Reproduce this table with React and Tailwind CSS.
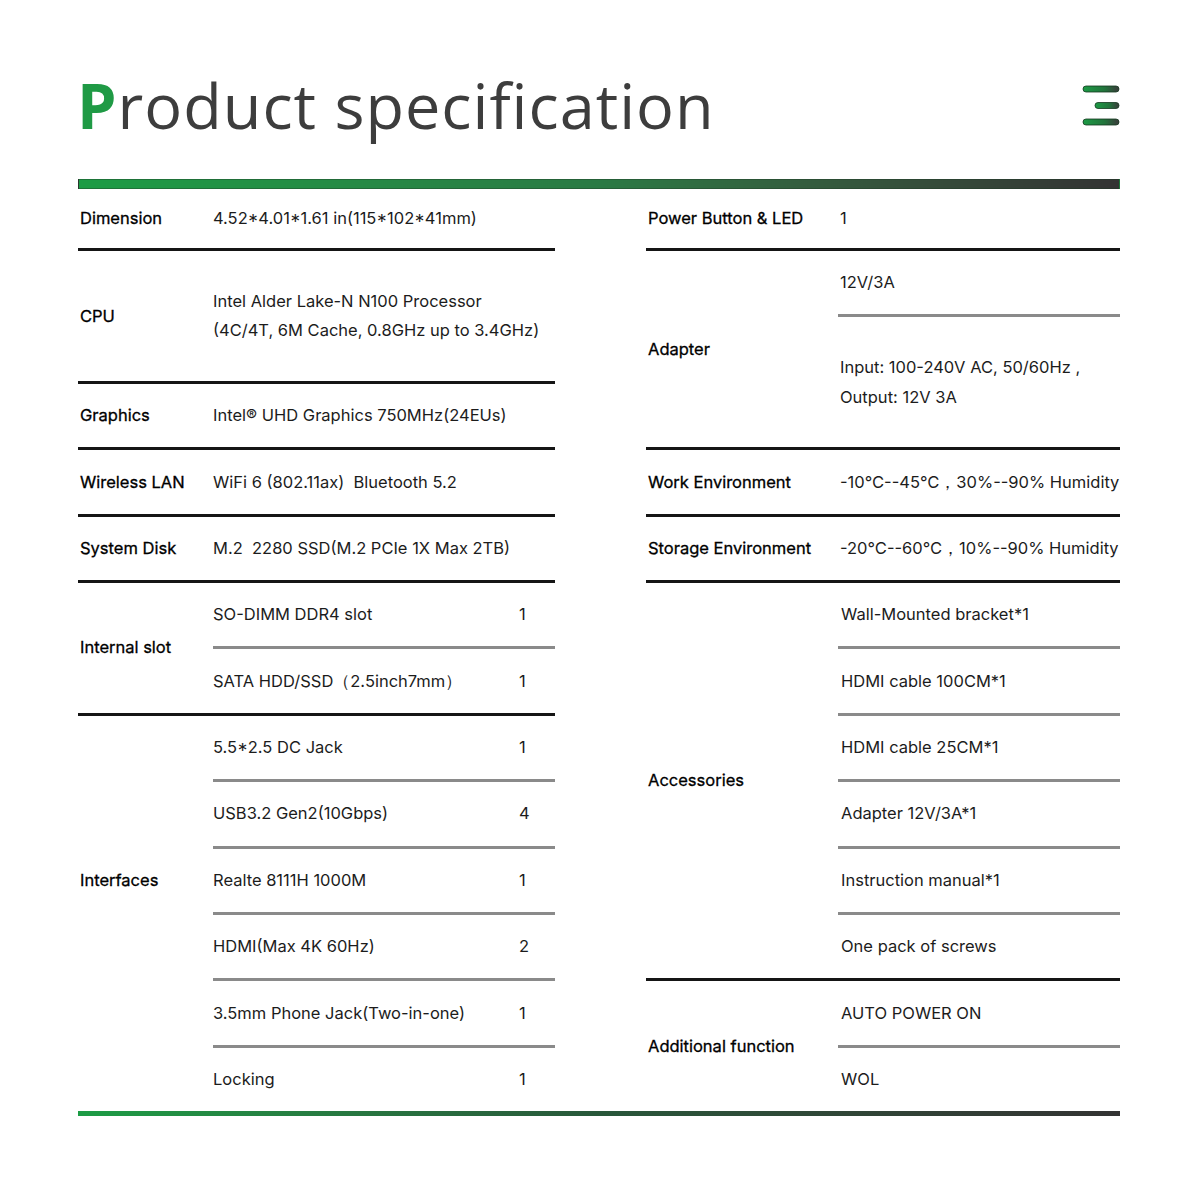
const U = "h-[66.4px]";

const Num = ({ children }) => <span className="w-[36px] shrink-0">{children}</span>;

// one sub line inside a multi-row group; last one carries no own border
const Sub = ({ children, last, h, qty, pad = "pl-0" }) => (
  <div
    className={`flex items-center ${pad} ${h} ${last ? "" : "border-b-[3px] border-[#8a8a8a]"}`}
  >
    <div className="flex-1">{children}</div>
    {qty !== undefined && <Num>{qty}</Num>}
  </div>
);

const Group = ({ label, labelW, children, last, labelPad = "" }) => (
  <div className={`flex ${last ? "" : "border-b-[3px] border-[#151515]"}`}>
    <div
      className={`${labelW} shrink-0 flex items-center pl-[2px] font-normal text-black [-webkit-text-stroke:0.3px_#000] ${labelPad}`}
    >
      {label}
    </div>
    <div className="flex-1 flex flex-col">{children}</div>
  </div>
);

const leftW = "w-[135px]";
const rightW = "w-[192px]";

const LeftColumn = () => (
  <div className="w-[477px] flex flex-col">
    <Group label="Dimension" labelW={leftW}>
      <Sub last h="h-[59px]">4.52*4.01*1.61 in(115*102*41mm)</Sub>
    </Group>
    <Group label="CPU" labelW={leftW}>
      <Sub last h="h-[129.8px]">
        <div className="leading-[29px]">
          Intel Alder Lake-N N100 Processor
          <br />
          (4C/4T, 6M Cache, 0.8GHz up to 3.4GHz)
        </div>
      </Sub>
    </Group>
    <Group label="Graphics" labelW={leftW}>
      <Sub last h="h-[63.4px]">Intel® UHD Graphics 750MHz(24EUs)</Sub>
    </Group>
    <Group label="Wireless LAN" labelW={leftW}>
      <Sub last h="h-[63.4px]">WiFi 6 (802.11ax)&nbsp; Bluetooth 5.2</Sub>
    </Group>
    <Group label="System Disk" labelW={leftW}>
      <Sub last h="h-[63.4px]">M.2&nbsp; 2280 SSD(M.2 PCIe 1X Max 2TB)</Sub>
    </Group>
    <Group label="Internal slot" labelW={leftW}>
      <Sub h={U} qty="1">SO-DIMM DDR4 slot</Sub>
      <Sub last h="h-[63.4px]" qty="1">SATA HDD/SSD（2.5inch7mm）</Sub>
    </Group>
    <Group label="Interfaces" labelW={leftW} last labelPad="pb-[66px]">
      <Sub h={U} qty="1">5.5*2.5 DC Jack</Sub>
      <Sub h={U} qty="4">USB3.2 Gen2(10Gbps)</Sub>
      <Sub h={U} qty="1">Realte 8111H 1000M</Sub>
      <Sub h={U} qty="2">HDMI(Max 4K 60Hz)</Sub>
      <Sub h={U} qty="1">3.5mm Phone Jack(Two-in-one)</Sub>
      <Sub last h="h-[63.2px]" qty="1">Locking</Sub>
    </Group>
  </div>
);

const accessories = [
  "Wall-Mounted bracket*1",
  "HDMI cable 100CM*1",
  "HDMI cable 25CM*1",
  "Adapter 12V/3A*1",
  "Instruction manual*1",
  "One pack of screws",
];

const RightColumn = () => (
  <div className="w-[474px] flex flex-col">
    <Group label="Power Button & LED" labelW={rightW}>
      <Sub last h="h-[59px]" pad="pl-[2px]">1</Sub>
    </Group>
    <Group label="Adapter" labelW={rightW}>
      <Sub h={U} pad="pl-[2px]">12V/3A</Sub>
      <Sub last h="h-[129.8px]" pad="pl-[2px]">
        <div className="leading-[30px]">
          Input: 100-240V AC, 50/60Hz ,
          <br />
          Output: 12V 3A
        </div>
      </Sub>
    </Group>
    <Group label="Work Environment" labelW={rightW}>
      <Sub last h="h-[63.4px]" pad="pl-[2px]">-10℃--45℃，30%--90% Humidity</Sub>
    </Group>
    <Group label="Storage Environment" labelW={rightW}>
      <Sub last h="h-[63.4px]" pad="pl-[2px]">-20℃--60℃，10%--90% Humidity</Sub>
    </Group>
    <Group label="Accessories" labelW={rightW}>
      {accessories.map((a, i) => (
        <Sub key={a} last={i === accessories.length - 1} h={i === accessories.length - 1 ? "h-[63.4px]" : U} pad="pl-[3px]">
          {a}
        </Sub>
      ))}
    </Group>
    <Group label="Additional function" labelW={rightW} last>
      <Sub h={U} pad="pl-[3px]">AUTO POWER ON</Sub>
      <Sub last h="h-[63.2px]" pad="pl-[3px]">WOL</Sub>
    </Group>
  </div>
);

const MenuMark = () => (
  <svg width="40" height="42" viewBox="0 0 40 42">
    <defs>
      <linearGradient id="mg" x1="0" x2="1" y1="0" y2="0">
        <stop offset="0" stopColor="#1c9b45" />
        <stop offset="0.6" stopColor="#22743c" />
        <stop offset="1" stopColor="#3a3a3a" />
      </linearGradient>
    </defs>
    <rect x="3" y="1" width="36" height="6" rx="3" fill="url(#mg)" stroke="#14391f" strokeWidth="0.8" />
    <rect x="15" y="17.5" width="24" height="6" rx="3" fill="url(#mg)" stroke="#14391f" strokeWidth="0.8" />
    <rect x="3" y="34" width="36" height="6" rx="3" fill="url(#mg)" stroke="#14391f" strokeWidth="0.8" />
  </svg>
);

export default function App() {
  return (
    <div
      className="w-[1200px] h-[1200px] bg-white text-[#1c1c1c] text-[16.5px]"
      style={{ fontFamily: "Inter, 'Noto Sans', sans-serif" }}
    >
      <div className="ml-[78px] w-[1042px]">
        <div className="h-[179px] flex items-start justify-between pt-[65px]">
          <h1
            className="text-[63px] leading-[80px] text-[#3d3d3d] tracking-[1px] -ml-[1px]"
            style={{ fontFamily: "'Open Sans', sans-serif" }}
          >
            <span className="text-[#1f9a45] font-bold">P</span>roduct specification
          </h1>
          <div className="pt-[20px]">
            <MenuMark />
          </div>
        </div>
        <div className="h-[10px] bg-linear-to-r from-[#1c9c45] via-[#2a7a44] to-[#333333] border border-[#1d3a26]/40" />
        <div className="flex justify-between">
          <LeftColumn />
          <RightColumn />
        </div>
        <div className="h-[5px] bg-linear-to-r from-[#1c9c45] via-[#28573a] to-[#333333]" />
      </div>
    </div>
  );
}
